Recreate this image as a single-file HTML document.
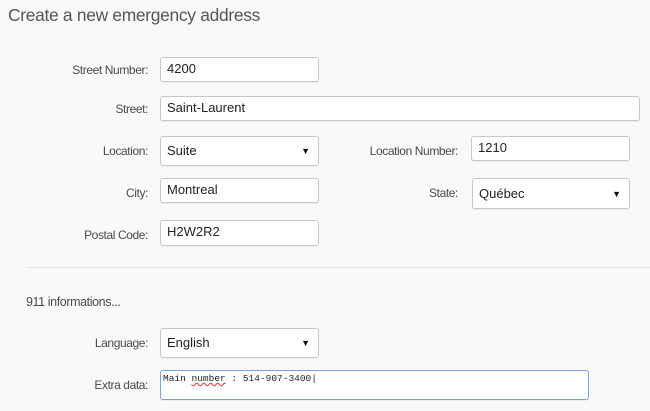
<!DOCTYPE html>
<html><head><meta charset="utf-8"><style>
body{margin:0;width:650px;height:411px;background:#f9f9f9;font-family:"Liberation Sans",sans-serif;position:relative;overflow:hidden}
.a{position:absolute}
.t{left:8px;top:5px;font-size:17.4px;color:#555;letter-spacing:-0.3px}
.l{font-size:12px;color:#4a4a4a;text-align:right;letter-spacing:-0.4px;line-height:14px}
.i{background:#fff;border:1px solid #c8c8c8;border-radius:3px;box-sizing:border-box;font-size:13px;color:#222;padding-left:6px;line-height:22px;box-shadow:0 1px 1px rgba(0,0,0,.06)}
.s{line-height:28px}
.s:after{content:"▼";position:absolute;right:8px;top:0;font-size:9px;color:#111}
</style></head><body>
<div class="a t">Create a new emergency address</div>

<div class="a l" style="right:502px;top:63px">Street Number:</div>
<div class="a i" style="left:160px;top:57px;width:159px;height:25px">4200</div>

<div class="a l" style="right:502px;top:102px">Street:</div>
<div class="a i" style="left:160px;top:96px;width:480px;height:25px">Saint-Laurent</div>

<div class="a l" style="right:502px;top:144px">Location:</div>
<div class="a i s" style="left:160px;top:136px;width:159px;height:30px">Suite</div>
<div class="a l" style="right:192px;top:144px">Location Number:</div>
<div class="a i" style="left:471px;top:136px;width:159px;height:25px">1210</div>

<div class="a l" style="right:502px;top:186px">City:</div>
<div class="a i" style="left:160px;top:178px;width:159px;height:25px">Montreal</div>
<div class="a l" style="right:192px;top:186px">State:</div>
<div class="a i s" style="left:472px;top:178px;width:158px;height:31px;line-height:30px">Québec</div>

<div class="a l" style="right:502px;top:228px">Postal Code:</div>
<div class="a i" style="left:160px;top:220px;width:159px;height:26px">H2W2R2</div>

<div class="a" style="left:27px;top:267px;width:623px;height:1px;background:#e2e2e2"></div>
<div class="a" style="left:26px;top:295px;font-size:12.5px;color:#4a4a4a;letter-spacing:-0.4px">911 informations...</div>

<div class="a l" style="right:502px;top:336px">Language:</div>
<div class="a i s" style="left:160px;top:328px;width:159px;height:30px">English</div>

<div class="a l" style="right:502px;top:378px">Extra data:</div>
<div class="a i" style="left:160px;top:370px;width:429px;height:30px;border-color:#7aa3d8;font-family:'Liberation Mono',monospace;font-size:9.5px;line-height:16px;padding-left:2px">Main <span style="text-decoration:underline wavy #d33">number</span> : 514-907-3400|</div>
</body></html>
